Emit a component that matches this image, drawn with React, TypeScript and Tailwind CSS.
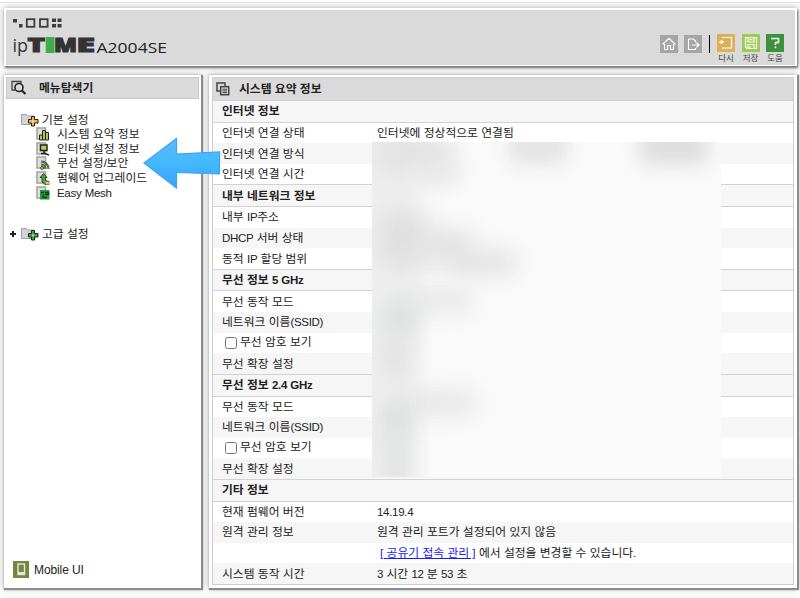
import type { ReactNode } from "react";

type Row = { label?: string; value?: ReactNode; checkbox?: boolean };
type Section = { title: string; rows: Row[] };

const wirelessRows: Row[] = [
    { label: "무선 동작 모드" },
    { label: "네트워크 이름(SSID)" },
    { label: "무선 암호 보기", checkbox: true },
    { label: "무선 확장 설정" },
];

const sections: Section[] = [
    {
        title: "인터넷 정보",
        rows: [
            { label: "인터넷 연결 상태", value: "인터넷에 정상적으로 연결됨" },
            { label: "인터넷 연결 방식" },
            { label: "인터넷 연결 시간" },
        ],
    },
    {
        title: "내부 네트워크 정보",
        rows: [{ label: "내부 IP주소" }, { label: "DHCP 서버 상태" }, { label: "동적 IP 할당 범위" }],
    },
    { title: "무선 정보 5 GHz", rows: wirelessRows },
    { title: "무선 정보 2.4 GHz", rows: wirelessRows },
    {
        title: "기타 정보",
        rows: [
            { label: "현재 펌웨어 버전", value: "14.19.4" },
            { label: "원격 관리 정보", value: "원격 관리 포트가 설정되어 있지 않음" },
            {
                value: (
                    <span className="pl-[3px]">
                        <a href="#" className="text-[#1a1aff] underline">
                            [ 공유기 접속 관리 ]
                        </a>{" "}
                        에서 설정을 변경할 수 있습니다.
                    </span>
                ),
            },
            { label: "시스템 동작 시간", value: "3 시간 12 분 53 초" },
        ],
    },
];

// Latin runs are set a little tighter than the Hangul around them
const Mixed = ({ text }: { text: string }) => (
    <>
        {text.split(/([A-Za-z0-9.()/]+)/).map((part, i) =>
            i % 2 ? (
                <span key={i} className="text-[11.500px] tracking-[-0.3px]">
                    {part}
                </span>
            ) : (
                part
            )
        )}
    </>
);

const Logo = () => (
    <svg width="160" height="42" viewBox="0 0 160 42" className="block">
        <g fill="#3c3c3c">
            <rect x="0" y="2" width="4" height="3.500" />
            <rect x="6" y="7" width="3.500" height="3.500" />
            <rect x="39" y="1.500" width="4" height="3.500" />
            <rect x="44.500" y="1.500" width="4" height="3.500" />
            <rect x="39" y="7" width="4" height="3.500" />
            <rect x="44.500" y="7" width="4" height="3.500" />
        </g>
        <g fill="none" stroke="#3c3c3c" strokeWidth="1.800">
            <rect x="13.800" y="2.200" width="7.600" height="7.600" />
            <rect x="27" y="2.200" width="7.600" height="7.600" />
        </g>
        <g fontFamily="'Open Sans', sans-serif" fill="#333">
            <text x="-0.500" y="35" fontSize="17.500" textLength="15.500" lengthAdjust="spacingAndGlyphs">
                ip
            </text>
            <g fontWeight="800" fontSize="18.500" stroke="#333" strokeWidth="1">
                <text x="14.500" y="34.500" textLength="17.500" lengthAdjust="spacingAndGlyphs">
                    T
                </text>
                <text x="32" y="34.500" textLength="10" lengthAdjust="spacingAndGlyphs" fill="#3fae49" stroke="#3fae49" strokeWidth="2">
                    I
                </text>
                <text x="41" y="34.500" textLength="23" lengthAdjust="spacingAndGlyphs">
                    M
                </text>
                <text x="63.500" y="34.500" textLength="18.500" lengthAdjust="spacingAndGlyphs">
                    E
                </text>
            </g>
            <text x="83.500" y="35.500" fontSize="13.800" fill="#222" textLength="70.500" lengthAdjust="spacingAndGlyphs">
                A2004SE
            </text>
        </g>
    </svg>
);

const HomeIcon = () => (
    <svg width="18" height="18" viewBox="0 0 18 18" fill="none" stroke="#fff" strokeWidth="1.100">
        <path d="M2.500 9.500 9 3.300l6.500 6.200M4.500 9v5.500h3v-4h3v4h3V9" />
    </svg>
);

const LogoutIcon = () => (
    <svg width="18" height="18" viewBox="0 0 18 18" fill="none" stroke="#fff" strokeWidth="1.200">
        <path d="M11.500 7.500v-1.500L9.500 4h-5v10.500h7v-1.500M8 10h6.500M12.500 7.500l2.500 2.500-2.500 2.500" />
    </svg>
);

const RefreshIcon = () => (
    <svg width="18" height="18" viewBox="0 0 18 18" fill="none" stroke="#fff" strokeWidth="1.200">
        <path d="M5 3.500h9.500v10.500H5M5 3.500" />
        <path d="M7 8H2.500M4.500 6v4" strokeWidth="1.600" />
    </svg>
);

const SaveIcon = () => (
    <svg width="18" height="18" viewBox="0 0 18 18" fill="none" stroke="#fff" strokeWidth="1.200">
        <path d="M3.500 3.500h11v11H5l-1.500-1.500zM6 3.500v4.500h6V3.500M6 14.500v-4h6v4M8 12v2M7.500 5.700h3" />
    </svg>
);

const HelpIcon = () => (
    <svg width="18" height="18" viewBox="0 0 18 18" fill="none" stroke="#fff" strokeWidth="1.500">
        <path d="M5 4.500h7.500v4H9.500v2.500M9.500 12.500v1.800" />
    </svg>
);

const SearchIcon = () => (
    <svg width="16" height="16" viewBox="0 0 16 16" fill="none" stroke="#444">
        <path d="M4 10H1V1.500h9V3" strokeWidth="1.300" />
        <circle cx="8" cy="7.500" r="4" stroke="#222" strokeWidth="1.600" />
        <path d="M10.800 10.500l3.700 3.500" stroke="#222" strokeWidth="2.200" />
    </svg>
);

const CopyIcon = () => (
    <svg width="14" height="14" viewBox="0 0 14 14" fill="none" stroke="#444" strokeWidth="1.500">
        <path d="M4 9H1V1h8v3" />
        <rect x="4.700" y="4.700" width="8" height="8" />
        <path d="M6.500 7.200h4.500M6.500 8.900h4.500M6.500 10.600h4.500" strokeWidth="1" />
    </svg>
);

const FolderIcon = ({ color }: { color: string }) => (
    <svg width="18" height="14" viewBox="0 0 18 14">
        <path d="M.5 1.500h5l1 1.500h6.500v8.500H.5z" fill="#d4d4d4" stroke="#a0a0a0" />
        <path d="M10.500 3.500h3v3h3.500v3.500h-3.500v3h-3v-3H7.500V6.500h3z" fill={color} stroke="#222" />
        <rect x="11" y="7.300" width="2" height="2" fill="#fff" opacity=".6" />
    </svg>
);

const Page = ({ children }: { children: ReactNode }) => (
    <svg width="14" height="14" viewBox="0 0 14 14">
        <rect x="1" y="1" width="8.500" height="11" fill="#dedede" stroke="#a6a6a6" strokeWidth="1.600" />
        {children}
    </svg>
);

const menu = [
    {
        label: "시스템 요약 정보",
        icon: (
            <Page>
                <path d="M3.500 8H6.500v5h-3zM6.500 3.500H9.500v9.500h-3zM9.500 5.500h3v7.500h-3z" fill="#b9c455" stroke="#222" />
            </Page>
        ),
    },
    {
        label: "인터넷 설정 정보",
        icon: (
            <Page>
                <path d="M4.500 3h6.500v5.500h-6.500z" fill="#b7d054" stroke="#222" strokeWidth="1.500" />
                <path d="M8 8v3M5 11.500h4l4 1.500" fill="none" stroke="#222" strokeWidth="1.500" />
            </Page>
        ),
    },
    {
        label: "무선 설정/보안",
        icon: (
            <Page>
                <path d="M5 5.500a7.500 7.500 0 0 1 7.500 7.500M5 8.500A4.500 4.500 0 0 1 9.500 13" fill="none" stroke="#24451d" strokeWidth="2" />
                <path d="M5 5.500a7.500 7.500 0 0 1 7.500 7.500M5 8.500A4.500 4.500 0 0 1 9.500 13" fill="none" stroke="#79ae55" strokeWidth=".8" />
                <circle cx="6" cy="12" r="1.500" fill="#f2bb50" stroke="#222" strokeWidth=".7" />
            </Page>
        ),
    },
    {
        label: "펌웨어 업그레이드",
        icon: (
            <Page>
                <path d="M7.500 2.500l3.500 4H9.500v3l3.500 1V13.500H9L6 11V6.500H4z" fill="#4ba53f" stroke="#222" strokeWidth=".8" />
                <path d="M9.500 10.500l4 .5v2.500H10z" fill="#e5c24b" />
            </Page>
        ),
    },
    {
        label: "Easy Mesh",
        icon: (
            <Page>
                <rect x="4" y="4" width="9.500" height="9.500" fill="#259b3c" />
                <path d="M5 6.500h3M9 6.500h3.500v2H9M7 8.500v3h4" fill="none" stroke="#173c1c" strokeWidth="1.300" />
            </Page>
        ),
    },
];

const tools = [
    { label: "다시", icon: <RefreshIcon />, className: "bg-[#dcaf59]" },
    { label: "저장", icon: <SaveIcon />, className: "bg-[#9ccc4f]" },
    { label: "도움", icon: <HelpIcon />, className: "bg-[#3b923d]" },
];

const Header = () => (
    <header className="flex h-[58px] w-[793px] justify-between border-2 border-b-1 border-white bg-[#dadada] pr-[11px] pl-[7px] shadow-[1px_2px_2px_#777,0_0_6px_#aaa]">
        <div className="pt-[7px]">
            <Logo />
        </div>
        <div className="flex items-start pt-[24px]">
            <div className="mt-px size-[18px] bg-[#a5a5a5]">
                <HomeIcon />
            </div>
            <div className="mt-px ml-[6px] size-[18px] bg-[#a5a5a5]">
                <LogoutIcon />
            </div>
            <div className="mt-px ml-[7px] h-[18px] w-px bg-black" />
            <div className="ml-[7px] flex gap-[6.500px]">
                {tools.map((tool) => (
                    <div key={tool.label} className="flex w-[18px] flex-col items-center">
                        <div className={`size-[18px] ${tool.className}`}>{tool.icon}</div>
                        <span className="text-[8.500px] leading-[12px] whitespace-nowrap text-[#444]">{tool.label}</span>
                    </div>
                ))}
            </div>
        </div>
    </header>
);

const Sidebar = () => (
    <aside className="flex h-[513px] w-[197px] flex-col border-2 border-white bg-white shadow-[1px_1px_1px_1px_#8c8c8c,0_0_6px_#aaa]">
        <div className="flex h-[22px] items-center border border-[#c9c9c9] bg-[#dadada] pl-[4px]">
            <SearchIcon />
            <span className="ml-[12px] font-bold">메뉴탐색기</span>
        </div>
        <nav className="flex-1 pt-[14px]">
            <div className="flex h-[14px] items-center pl-[15px]">
                <FolderIcon color="#efb64a" />
                <span className="ml-[3px]">기본 설정</span>
            </div>
            {menu.map((item) => (
                <div key={item.label} className="flex h-[14.600px] items-center pl-[30px]">
                    {item.icon}
                    <span className="ml-[7px] whitespace-nowrap">
                        <Mixed text={item.label} />
                    </span>
                </div>
            ))}
            <div className="mt-[27px] flex h-[14px] items-center pl-[4px]">
                <svg width="6" height="6" viewBox="0 0 6 6">
                    <path d="M3 0v6M0 3h6" stroke="#222" strokeWidth="2" />
                </svg>
                <span className="ml-[5px]">
                    <FolderIcon color="#37a33d" />
                </span>
                <span className="ml-[3px]">고급 설정</span>
            </div>
        </nav>
        <div className="flex h-[25px] items-start pl-[7px]">
            <svg width="16" height="17" viewBox="0 0 16 17">
                <path d="M0 0h16v17H0z" fill="#74863f" />
                <rect x="5" y="3" width="6.500" height="10.500" fill="#74863f" stroke="#e5e9d5" strokeWidth="1.400" />
                <path d="M5 11h6.500v2.500H5z" fill="#e5e9d5" />
            </svg>
            <span className="ml-[5px] text-[12px] leading-[19px] tracking-[-0.1px]">Mobile UI</span>
        </div>
    </aside>
);

// Soft patches that hide the private values
const RedactedArea = () => (
    <div className="absolute top-[64px] left-[159px] h-[335px] w-[349px] overflow-hidden bg-[#fafafa]">
        <div className="absolute top-0 left-0 h-full w-[60px] bg-linear-to-r from-[#efefef] via-[#efefef] to-[#fafafa]" />
        <div className="absolute -top-2 left-[5px] h-[40px] w-[75px] bg-[#e2e2e2] blur-[12px]" />
        <div className="absolute top-[20px] left-[45px] h-[22px] w-[40px] bg-[#e8e8e8] blur-[10px]" />
        <div className="absolute -top-3 left-[137px] h-[34px] w-[58px] bg-[#e2e2e2] blur-[10px]" />
        <div className="absolute -top-3 left-[268px] h-[34px] w-[68px] bg-[#dcdcdc] blur-[10px]" />
        <div className="absolute top-[70px] left-[8px] h-[54px] w-[48px] bg-[#dedede] blur-[13px]" />
        <div className="absolute top-[88px] left-[40px] h-[32px] w-[60px] bg-[#e3e3e3] blur-[11px]" />
        <div className="absolute top-[108px] left-[75px] h-[25px] w-[68px] bg-[#e2e2e2] blur-[11px]" />
        <div className="absolute top-[143px] left-[30px] h-[30px] w-[70px] bg-[#ebebeb] blur-[10px]" />
        <div className="absolute top-[158px] left-[10px] h-[36px] w-[36px] bg-[#dde1df] blur-[11px]" />
        <div className="absolute top-[195px] left-[10px] h-[40px] w-[28px] bg-[#e2e2e2] blur-[11px]" />
        <div className="absolute top-[248px] left-[30px] h-[26px] w-[72px] bg-[#e6e6e6] blur-[11px]" />
        <div className="absolute top-[260px] left-[10px] h-[32px] w-[28px] bg-[#dbe0dd] blur-[10px]" />
        <div className="absolute top-[285px] left-[10px] h-[60px] w-[28px] bg-[#e2e3e3] blur-[10px]" />
    </div>
);

const Summary = () => (
    <main className="h-[513px] w-[588px] border-3 border-t-2 border-white bg-white shadow-[1px_1px_1px_1px_#8c8c8c,0_0_6px_#aaa]">
        <div className="relative flex h-[508px] flex-col border border-[#cfcfcf]">
            <div className="flex h-[22px] shrink-0 items-center bg-[#dadada] pl-[3px]">
                <CopyIcon />
                <span className="ml-[9px] font-bold">시스템 요약 정보</span>
            </div>
            <div className="flex flex-1 flex-col">
                {sections.map((section) => (
                    <section key={section.title} className="contents">
                        <h2 className="flex flex-1 items-center border-y border-[#d2d2d2] bg-[#f6f6f6] pl-[9px] font-bold">
                            <span>
                                <Mixed text={section.title} />
                            </span>
                        </h2>
                        {section.rows.map((row, i) => (
                            <div key={i} className="flex flex-1 items-center pl-[9px] whitespace-nowrap even:bg-white odd:bg-[#f6f6f6]">
                                <div className="flex w-[155px] items-center">
                                    {row.checkbox && (
                                        <input type="checkbox" className="mr-[3px] ml-[3px] size-[12px] shrink-0" />
                                    )}
                                    <span className={row.checkbox ? "-mt-[3px]" : ""}>
                                        <Mixed text={row.label ?? ""} />
                                    </span>
                                </div>
                                <div>{typeof row.value === "string" ? <Mixed text={row.value} /> : row.value}</div>
                            </div>
                        ))}
                    </section>
                ))}
            </div>
            <RedactedArea />
        </div>
    </main>
);

export default function App() {
    return (
        <div className="relative h-[598px] w-[800px] overflow-hidden bg-white pt-[2px] font-['Liberation_Sans','Noto_Sans_CJK_KR',sans-serif] text-[11.800px] leading-[14px] text-[#222]">
            <div className="h-[596px] border-t border-[#e2e2e2] bg-[#fbfbfb] pt-[5px] pl-[4px]">
                <Header />
                <div className="mt-[9px] flex gap-[8px]">
                    <Sidebar />
                    <Summary />
                </div>
            </div>
            <svg className="absolute top-[136px] left-[142px]" width="80" height="54" viewBox="0 0 80 54">
                <defs>
                    <linearGradient id="arrow" x1="0" y1="0" x2="0" y2="1">
                        <stop offset="0" stopColor="#5bbcfb" />
                        <stop offset=".5" stopColor="#43b9fd" />
                        <stop offset="1" stopColor="#3aa0fb" />
                    </linearGradient>
                </defs>
                <path d="M2 27 34.500 2.500V18L77.500 16v22L34.500 36.500V52z" fill="url(#arrow)" stroke="#3ba3f8" strokeWidth="1.200" />
            </svg>
        </div>
    );
}
